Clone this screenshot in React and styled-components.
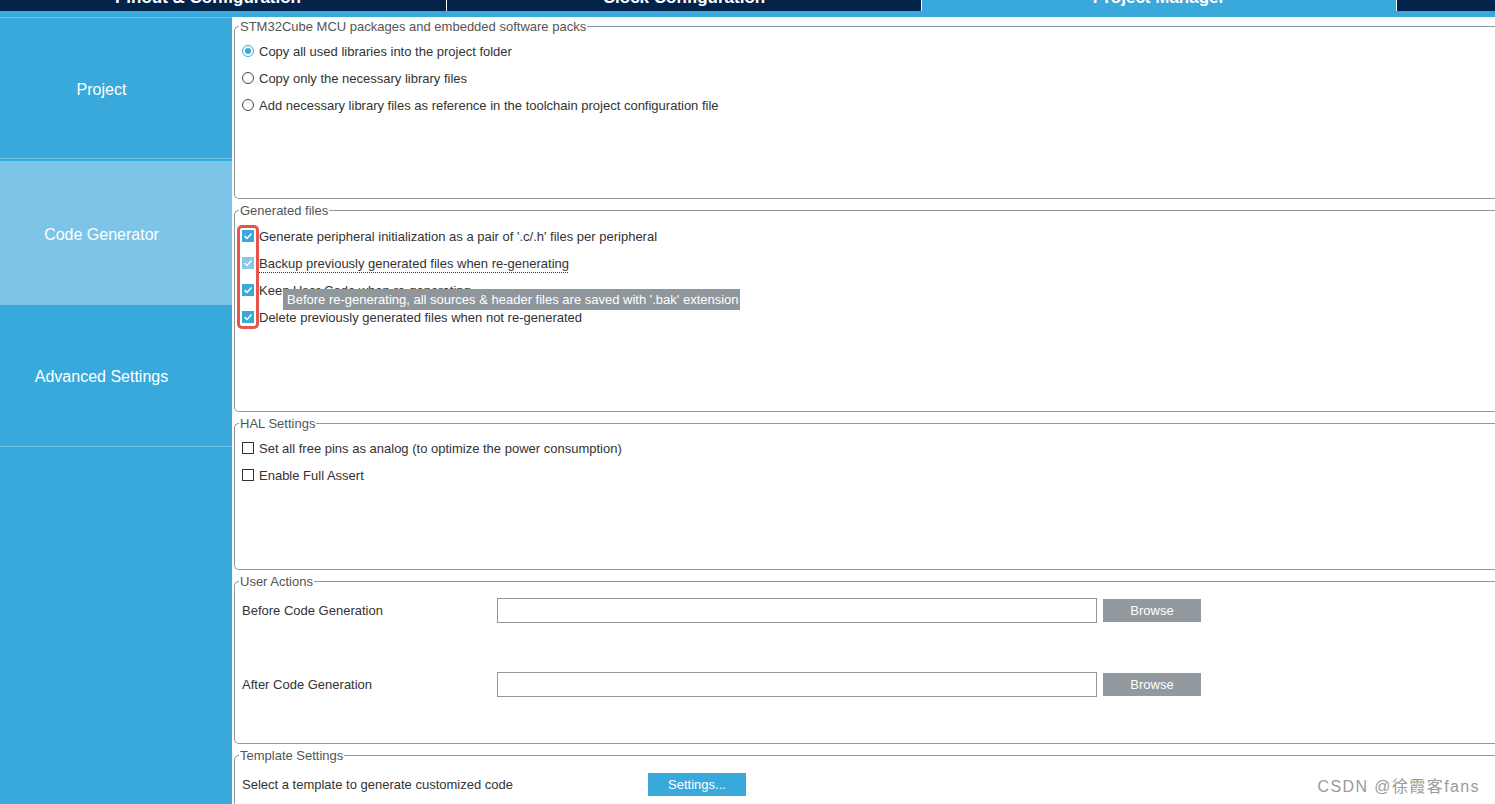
import React from 'react';
import styled, { createGlobalStyle } from 'styled-components';

const GlobalStyle = createGlobalStyle`
  *, *::before, *::after { box-sizing: border-box; }
  html, body { margin: 0; padding: 0; background: #fff; overflow: hidden; }
  body { font-family: "Liberation Sans", Arial, sans-serif; }
`;

const BLUE = '#39a9dc';
const NAVY = '#03234b';
const GRAY = '#8f979e';

const Page = styled.div`
  position: relative;
  width: 100%;
  height: 804px;
  display: flex;
  flex-direction: column;
  overflow: hidden;
`;

const TabBar = styled.div`
  display: flex;
  height: 11px;
  background: ${NAVY};
  flex-shrink: 0;
`;

const Tab = styled.div`
  width: ${p => p.$w}px;
  height: 11px;
  overflow: hidden;
  flex-shrink: 0;
  background: ${p => (p.$active ? BLUE : NAVY)};
  border-right: 1px solid #fff;
`;

const TabLabel = styled.span`
  display: block;
  margin-top: -12px;
  line-height: 20px;
  font-size: 17px;
  font-weight: bold;
  color: #fff;
  text-align: center;
  white-space: nowrap;
  padding-right: ${p => p.$pr || 0}px;
`;

const Strip = styled.div`
  height: 6px;
  background: ${BLUE};
  flex-shrink: 0;
`;

const Body = styled.div`
  flex: 1;
  display: flex;
  min-height: 0;
`;

const Sidebar = styled.nav`
  width: 232px;
  flex-shrink: 0;
  background: ${BLUE};
  border-top: 1px solid #6cc0e8;
  display: flex;
  flex-direction: column;
`;

const NavItem = styled.div`
  height: ${p => p.$h}px;
  margin-bottom: ${p => p.$mb || 0}px;
  background: ${p => (p.$active ? '#7cc4e8' : 'transparent')};
  border-bottom: ${p => (p.$line ? '1px solid #6cc0e8' : 'none')};
  display: flex;
  align-items: center;
  justify-content: center;
  padding: 3px 29px 0 0;
  color: #fff;
  font-size: 16px;
  flex-shrink: 0;
`;

const Main = styled.main`
  flex: 1;
  min-width: 0;
  padding: 1px 0 0 2px;
  display: flex;
  flex-direction: column;
  gap: 3px;
  overflow: hidden;
`;

const Group = styled.fieldset`
  margin: 0;
  padding: ${p => p.$pt}px 0 0 4px;
  height: ${p => p.$h}px;
  flex-shrink: 0;
  min-width: 0;
  border: 1px solid ${GRAY};
  border-right: none;
  border-radius: 5px 0 0 5px;
`;

const Legend = styled.legend`
  padding: 1px 1px 0;
  font-size: 13px;
  line-height: 16px;
  color: #555;
`;

const OptionList = styled.div`
  position: relative;
  display: flex;
  flex-direction: column;
`;

const OptionRow = styled.label`
  display: flex;
  align-items: center;
  height: 27px;
  padding-left: 3px;
  gap: 5px;
  font-size: 13px;
  color: #333;
  white-space: nowrap;
`;

const Radio = styled.span`
  width: 12px;
  height: 12px;
  border-radius: 50%;
  border: 1px solid ${p => (p.$checked ? BLUE : '#444')};
  background: #fff;
  display: flex;
  align-items: center;
  justify-content: center;
  flex-shrink: 0;
  &::after {
    content: '';
    width: 6px;
    height: 6px;
    border-radius: 50%;
    background: ${p => (p.$checked ? BLUE : 'transparent')};
  }
`;

const EmptyBox = styled.span`
  width: 12px;
  height: 12px;
  border: 1px solid #333;
  background: #fff;
  flex-shrink: 0;
`;

const CheckSvg = styled.svg`
  flex-shrink: 0;
  display: block;
`;

const CheckedBox = ({ tone }) => (
  <CheckSvg width="12" height="12" viewBox="0 0 12 12">
    <rect width="12" height="12" fill={tone} />
    <path d="M2.6 6.1 L5 8.5 L9.5 3.5" stroke="#fff" strokeWidth="1.5" fill="none" />
  </CheckSvg>
);

const Dotted = styled.span`
  text-decoration: underline dotted #333;
  text-decoration-thickness: 1px;
  text-underline-offset: 4px;
`;

const Highlight = styled.div`
  position: absolute;
  left: -2px;
  top: 2px;
  width: 22px;
  height: 104px;
  border: 3px solid #e8534c;
  border-radius: 5px;
  pointer-events: none;
`;

const Tooltip = styled.div`
  position: absolute;
  left: 44px;
  top: 66px;
  width: 457px;
  height: 21px;
  background: #8f969c;
  color: #fff;
  font-size: 13px;
  line-height: 21px;
  padding-left: 4px;
  white-space: nowrap;
  z-index: 2;
`;

const FieldRow = styled.div`
  display: flex;
  align-items: center;
  height: ${p => p.$h}px;
  padding-left: 3px;
  margin-top: ${p => p.$mt || 0}px;
`;

const FieldLabel = styled.span`
  width: ${p => p.$w}px;
  flex-shrink: 0;
  font-size: 13px;
  color: #333;
  white-space: nowrap;
`;

const PathInput = styled.input`
  width: 600px;
  height: 25px;
  margin: 0 6px 0 0;
  border: 1px solid ${GRAY};
  background: #fff;
  flex-shrink: 0;
  outline: none;
`;

const ActionButton = styled.button`
  width: 98px;
  height: 23px;
  border: none;
  padding: 0;
  background: ${p => p.$bg};
  color: #fff;
  font-family: "Liberation Sans", Arial, sans-serif;
  font-size: 13px;
  flex-shrink: 0;
`;

const Watermark = styled.div`
  position: absolute;
  right: 15px;
  bottom: 7px;
  font-family: "Liberation Sans", "Noto Sans CJK SC", sans-serif;
  font-size: 16px;
  letter-spacing: 1.4px;
  line-height: 20px;
  color: #9a9a9a;
  text-shadow: 0 0 1px #fff;
  pointer-events: none;
`;

export default function App() {
  return (
    <>
      <GlobalStyle />
      <Page>
        <TabBar>
          <Tab $w={447}><TabLabel $pr={30}>Pinout &amp; Configuration</TabLabel></Tab>
          <Tab $w={475}><TabLabel>Clock Configuration</TabLabel></Tab>
          <Tab $w={475} $active><TabLabel>Project Manager</TabLabel></Tab>
        </TabBar>
        <Strip />
        <Body>
          <Sidebar>
            <NavItem $h={141} $line $mb={2}>Project</NavItem>
            <NavItem $h={144} $active>Code Generator</NavItem>
            <NavItem $h={142} $line>Advanced Settings</NavItem>
          </Sidebar>
          <Main>
            <Group $h={181} $pt={2.5}>
              <Legend>STM32Cube MCU packages and embedded software packs</Legend>
              <OptionList>
                <OptionRow><Radio $checked />Copy all used libraries into the project folder</OptionRow>
                <OptionRow><Radio />Copy only the necessary library files</OptionRow>
                <OptionRow><Radio />Add necessary library files as reference in the toolchain project configuration file</OptionRow>
              </OptionList>
            </Group>
            <Group $h={210} $pt={3.5}>
              <Legend>Generated files</Legend>
              <OptionList>
                <OptionRow><CheckedBox tone={BLUE} />Generate peripheral initialization as a pair of '.c/.h' files per peripheral</OptionRow>
                <OptionRow><CheckedBox tone="#84c8ea" /><Dotted>Backup previously generated files when re-generating</Dotted></OptionRow>
                <OptionRow><CheckedBox tone={BLUE} />Keep User Code when re-generating</OptionRow>
                <OptionRow><CheckedBox tone={BLUE} />Delete previously generated files when not re-generated</OptionRow>
                <Highlight />
                <Tooltip>Before re-generating, all sources &amp; header files are saved with '.bak' extension</Tooltip>
              </OptionList>
            </Group>
            <Group $h={155} $pt={2.5}>
              <Legend>HAL Settings</Legend>
              <OptionList>
                <OptionRow><EmptyBox />Set all free pins as analog (to optimize the power consumption)</OptionRow>
                <OptionRow><EmptyBox />Enable Full Assert</OptionRow>
              </OptionList>
            </Group>
            <Group $h={171} $pt={7.5}>
              <Legend>User Actions</Legend>
              <FieldRow $h={25}>
                <FieldLabel $w={255}>Before Code Generation</FieldLabel>
                <PathInput />
                <ActionButton $bg="#92999f">Browse</ActionButton>
              </FieldRow>
              <FieldRow $h={25} $mt={49}>
                <FieldLabel $w={255}>After Code Generation</FieldLabel>
                <PathInput />
                <ActionButton $bg="#92999f">Browse</ActionButton>
              </FieldRow>
            </Group>
            <Group $h={120} $pt={9}>
              <Legend>Template Settings</Legend>
              <FieldRow $h={23}>
                <FieldLabel $w={406}>Select a template to generate customized code</FieldLabel>
                <ActionButton $bg={BLUE}>Settings...</ActionButton>
              </FieldRow>
            </Group>
          </Main>
        </Body>
        <Watermark>CSDN @徐霞客fans</Watermark>
      </Page>
    </>
  );
}
